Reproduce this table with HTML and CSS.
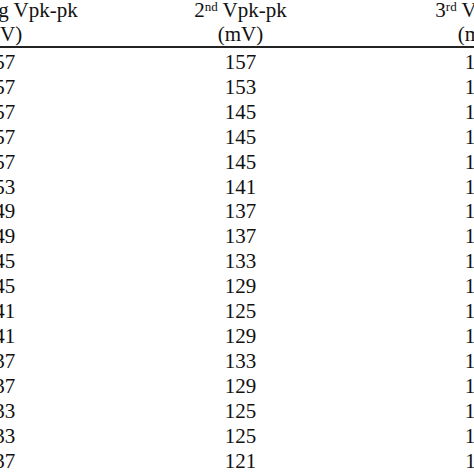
FILE: index.html
```html
<!DOCTYPE html>
<html>
<head>
<meta charset="utf-8">
<link rel="stylesheet" href="styles.css">
</head>
<body>
<div class="frame">
<table class="data">
<thead>
<tr><th class="c1">Beginning Vpk-pk<br>(mV)</th><th class="c2">2<sup>nd</sup> Vpk-pk<br>(mV)</th><th class="c3">3<sup>rd</sup> Vpk-pk<br>(mV)</th></tr>
</thead>
<tbody>
<tr><td>157</td><td>157</td><td>157</td></tr>
<tr><td>157</td><td>153</td><td>153</td></tr>
<tr><td>157</td><td>145</td><td>145</td></tr>
<tr><td>157</td><td>145</td><td>141</td></tr>
<tr><td>157</td><td>145</td><td>141</td></tr>
<tr><td>153</td><td>141</td><td>137</td></tr>
<tr><td>149</td><td>137</td><td>133</td></tr>
<tr><td>149</td><td>137</td><td>133</td></tr>
<tr><td>145</td><td>133</td><td>129</td></tr>
<tr><td>145</td><td>129</td><td>125</td></tr>
<tr><td>141</td><td>125</td><td>121</td></tr>
<tr><td>141</td><td>129</td><td>125</td></tr>
<tr><td>137</td><td>133</td><td>129</td></tr>
<tr><td>137</td><td>129</td><td>125</td></tr>
<tr><td>133</td><td>125</td><td>121</td></tr>
<tr><td>133</td><td>125</td><td>121</td></tr>
<tr><td>137</td><td>121</td><td>117</td></tr>
</tbody>
</table>
</div>
</body>
</html>
```
FILE: styles.css
```css
html, body {
  margin: 0;
  padding: 0;
  background: #ffffff;
}
.frame {
  width: 474px;
  height: 474px;
  overflow: hidden;
}
.data {
  border-collapse: collapse;
  table-layout: fixed;
  width: 721px;
  margin-left: -121px;
  margin-top: -2px;
  font-family: "Liberation Serif", "Times New Roman", serif;
  font-size: 21px;
  color: #111111;
  white-space: nowrap;
}
.data .c1, .data .c2 {
  width: 241px;
}
.data .c3 {
  width: 239px;
}
.data th, .data td {
  padding: 0;
  text-align: center;
  font-weight: normal;
}
.data th {
  line-height: 24px;
  border-bottom: 2px solid #222222;
  vertical-align: top;
}
.data sup {
  font-size: 13px;
  line-height: 0;
  vertical-align: 6px;
}
.data td {
  line-height: 24.9px;
}
.data tbody tr:first-child td {
  padding-top: 2px;
}
```
